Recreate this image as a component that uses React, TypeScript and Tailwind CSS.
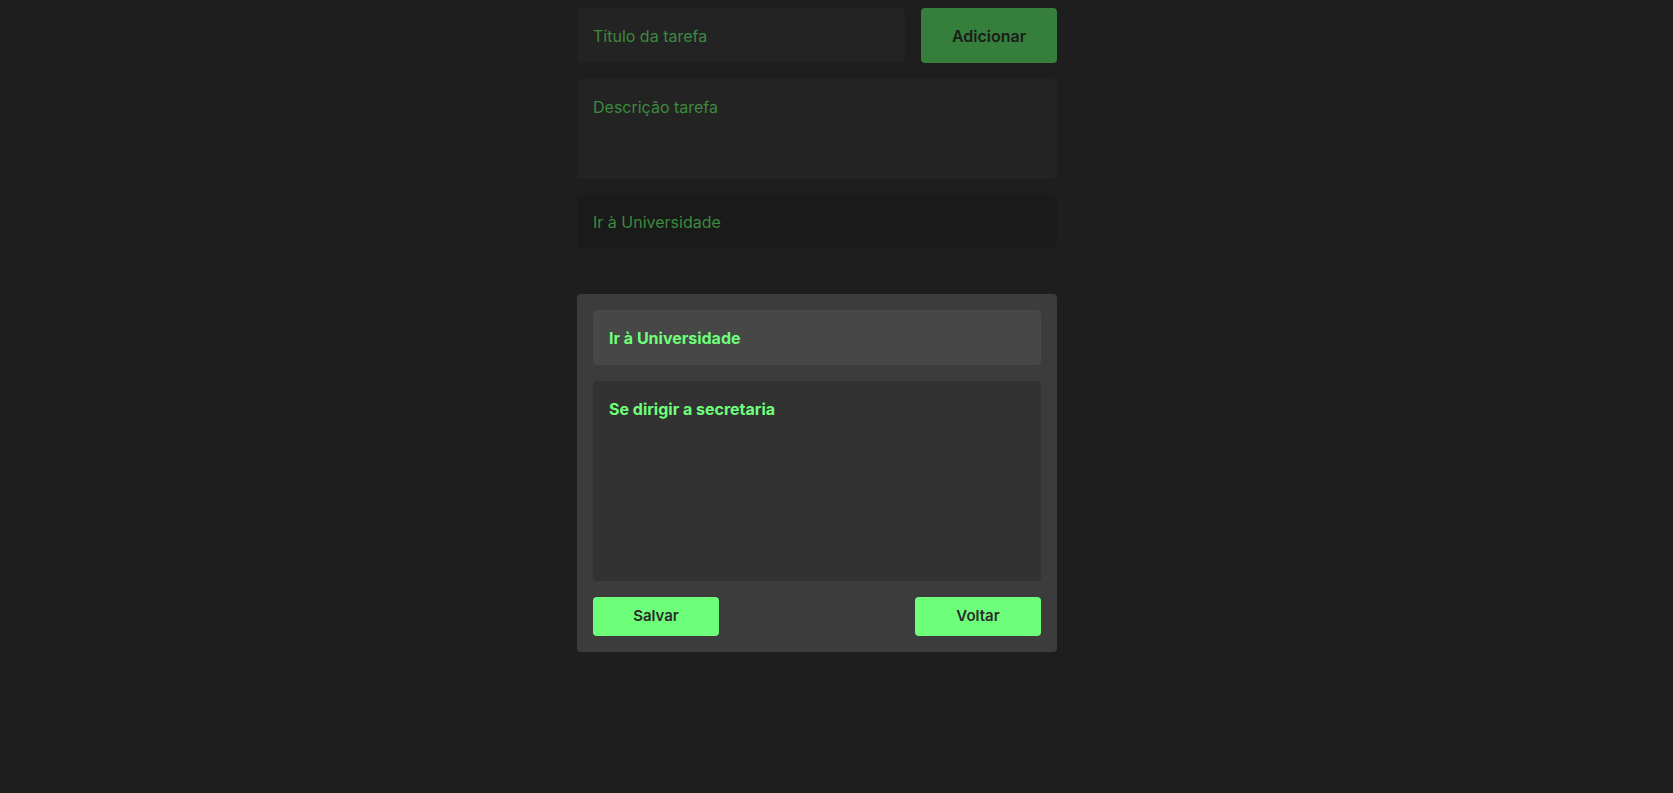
import React from "react";

export default function App() {
  return (
    <div
      className="min-h-[793px] w-full bg-[#1e1e1e] flex justify-center pr-[39px]"
      style={{ fontFamily: "Inter, 'Noto Sans', sans-serif" }}
    >
      <div className="w-[480px] pt-[8px] flex flex-col">
        <div className="flex gap-[16px]">
          <input
            className="w-[328px] h-[55px] rounded-[4px] bg-[#232323] px-[16px] text-[16px] text-[#3b8a3e] placeholder:text-[#3b8a3e] outline-none"
            placeholder="Título da tarefa"
          />
          <button className="flex-1 h-[55px] rounded-[4px] bg-[#367e3b] text-[16px] font-semibold text-[#1c1c1c]">
            Adicionar
          </button>
        </div>
        <textarea
          className="mt-[16px] h-[100px] rounded-[4px] bg-[#232323] px-[16px] py-[16px] text-[16px] text-[#3b8a3e] placeholder:text-[#3b8a3e] outline-none resize-none"
          placeholder="Descrição tarefa"
        />
        <div className="mt-[16px] h-[53px] rounded-[4px] bg-[#1a1a1a] px-[16px] flex items-center text-[16px] text-[#3b8a3e]">
          Ir à Universidade
        </div>
        <div className="mt-[46px] rounded-[4px] bg-[#3c3c3c] p-[16px] flex flex-col">
          <div className="h-[55px] rounded-[4px] bg-[#474747] px-[16px] flex items-center text-[16px] font-bold text-[#6dff7a]">
            Ir à Universidade
          </div>
          <div className="mt-[16px] h-[200px] rounded-[4px] bg-[#323232] px-[16px] py-[16px] text-[16px] font-bold text-[#6dff7a]">
            Se dirigir a secretaria
          </div>
          <div className="mt-[16px] flex justify-between">
            <button className="w-[126px] h-[39px] rounded-[4px] bg-[#6dff7a] text-[15px] font-semibold text-[#2b2b2b]">
              Salvar
            </button>
            <button className="w-[126px] h-[39px] rounded-[4px] bg-[#6dff7a] text-[15px] font-semibold text-[#2b2b2b]">
              Voltar
            </button>
          </div>
        </div>
      </div>
    </div>
  );
}
